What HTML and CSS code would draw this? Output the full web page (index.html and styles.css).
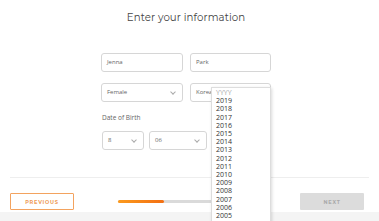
FILE: index.html
```html
<!DOCTYPE html>
<html><head>
<link rel="stylesheet" href="styles.css">
</head>
<body>

<div class="page">
  <div class="content">
    <h1 class="title">Enter your information</h1>

    <div class="row two">
      <div class="field">Jenna</div>
      <div class="field">Park</div>
    </div>

    <div class="row two">
      <div class="field select">Female<span class="chev"></span></div>
      <div class="field select">Korea<span class="chev"></span></div>
    </div>

    <div class="label">Date of Birth</div>

    <div class="row three">
      <div class="field select">8<span class="chev"></span></div>
      <div class="field select">06<span class="chev"></span></div>
      <div class="field select"></div>
    </div>
  </div>

  <div class="footer">
    <button class="btn prev">PREVIOUS</button>
    <div class="progress"><div class="fill" style="width: 34%"></div></div>
    <button class="btn next">NEXT</button>
  </div>
  <div class="strip"></div>

  <!-- open year list of the third select -->
  <ul class="yearlist">
    <li class="hint">YYYY</li>
    <li>2019</li>
    <li>2018</li>
    <li>2017</li>
    <li>2016</li>
    <li>2015</li>
    <li>2014</li>
    <li>2013</li>
    <li>2012</li>
    <li>2011</li>
    <li>2010</li>
    <li>2009</li>
    <li>2008</li>
    <li>2007</li>
    <li>2006</li>
    <li>2005</li>
  </ul>
</div>

</body>
</html>
```

FILE: styles.css
```css
/* page frame */
body {
  margin: 0;
  background: #fff;
  font-family: "Montserrat", "Lato", "Open Sans", sans-serif;
  overflow: hidden;
}

.page {
  position: relative;
  width: 379px;
  height: 221px;
  overflow: hidden;
}

.content {
  width: 170px;
  margin-left: 101px;
  padding-top: 11px;
}

.title {
  margin: 0 0 28px;
  text-align: center;
  font-weight: 400;
  font-size: 10.2px;
  line-height: 14px;
  color: #444;
  letter-spacing: 0.1px;
}

/* form rows */
.row {
  display: grid;
  gap: 7px;
  margin-bottom: 11px;
}
.row.two { grid-template-columns: 82px 81px; }
.row.three {
  grid-template-columns: 42px 58px 58px;
  gap: 5px;
  margin-left: 1px;
}

.field {
  position: relative;
  height: 19px;
  box-sizing: border-box;
  border: 1px solid #d6d6d6;
  border-radius: 3px;
  padding-left: 5px;
  font-family: "Open Sans", sans-serif;
  font-size: 6px;
  line-height: 17px;
  color: #666;
}

.chev {
  position: absolute;
  right: 7px;
  top: 6px;
  width: 3px;
  height: 3px;
  border-right: 1px solid #aaa;
  border-bottom: 1px solid #aaa;
  transform: rotate(45deg);
}

.label {
  margin-left: 1px;
  font-family: "Open Sans", sans-serif;
  font-size: 6.5px;
  line-height: 10px;
  color: #666;
  height: 18px;
}

/* footer */
.footer {
  display: flex;
  align-items: center;
  justify-content: space-between;
  margin: 27px 10px 0;
  padding-top: 15px;
  border-top: 1px solid #eee;
  height: 17px;
}

.btn {
  width: 64px;
  height: 17px;
  box-sizing: border-box;
  padding: 0;
  font-family: inherit;
  font-size: 5px;
  font-weight: 700;
  letter-spacing: 0.8px;
  border-radius: 1px;
}
.prev {
  background: #fff;
  border: 1px solid #f3a35f;
  color: #ee9a55;
}
.next {
  background: #dcdcdc;
  border: none;
  color: #aaa;
  margin-right: 5px;
}

.progress {
  width: 137px;
  height: 3px;
  background: #dadada;
  margin-left: -2px;
  border-radius: 2px;
}
.fill {
  height: 3px;
  background: linear-gradient(to right, #fb9a1e, #f36f12);
  border-radius: 2px;
}

.strip {
  margin-top: 2px;
  height: 12px;
  background: #f4f4f4;
}

/* dropdown over the year select */
.yearlist {
  position: absolute;
  left: 211px;
  top: 87px;
  width: 58px;
  margin: 0;
  padding: 1px 0 6px;
  list-style: none;
  background: #fff;
  border: 1px solid #ddd;
  box-shadow: 1px 1px 3px rgba(0, 0, 0, 0.15);
  font-family: "Open Sans", "Liberation Sans", sans-serif;
}
.yearlist li {
  padding-left: 4px;
  font-size: 7px;
  line-height: 8.2px;
  color: #333;
}
.yearlist .hint { color: #aaa; }
```
